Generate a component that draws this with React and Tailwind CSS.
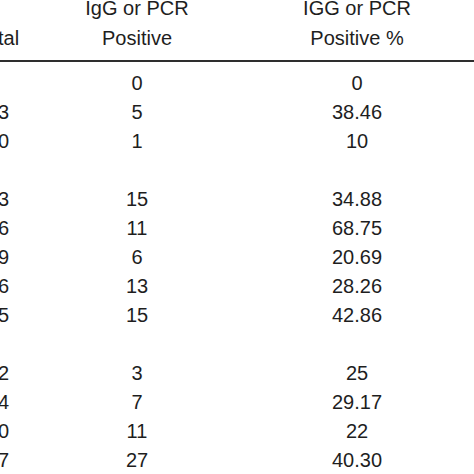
import React from 'react';

const rows = [
  ['', '0', '0'],
  ['13', '5', '38.46'],
  ['10', '1', '10'],
  null,
  ['43', '15', '34.88'],
  ['16', '11', '68.75'],
  ['29', '6', '20.69'],
  ['46', '13', '28.26'],
  ['35', '15', '42.86'],
  null,
  ['12', '3', '25'],
  ['24', '7', '29.17'],
  ['50', '11', '22'],
  ['67', '27', '40.30'],
];

const cols = 'grid grid-cols-[74px_204px_236px] text-center';

export default function App() {
  return (
    <div className="w-[474px] h-[474px] overflow-hidden bg-white text-[#1e1e1e] text-[20px]" style={{ fontFamily: '"Liberation Sans", Arial, sans-serif' }}>
      <div className="ml-[-39px] w-[514px]">
        {/* header */}
        <div className={`${cols} mt-[-7px] pb-[7px] leading-[30px]`}>
          <div className="flex flex-col">
            <span>&nbsp;</span>
            <span>Total</span>
          </div>
          <div className="flex flex-col">
            <span>IgG or PCR</span>
            <span>Positive</span>
          </div>
          <div className="flex flex-col">
            <span>IGG or PCR</span>
            <span>Positive %</span>
          </div>
        </div>
        <div className="h-[2px] bg-[#2e2e2e]" />

        {/* body */}
        <div className="pt-[7px] leading-[29px]">
          {rows.map((r, i) =>
            r ? (
              <div key={i} className={cols}>
                <span>{r[0]}</span>
                <span>{r[1]}</span>
                <span>{r[2]}</span>
              </div>
            ) : (
              <div key={i} className="h-[29px]" />
            )
          )}
        </div>
      </div>
    </div>
  );
}
